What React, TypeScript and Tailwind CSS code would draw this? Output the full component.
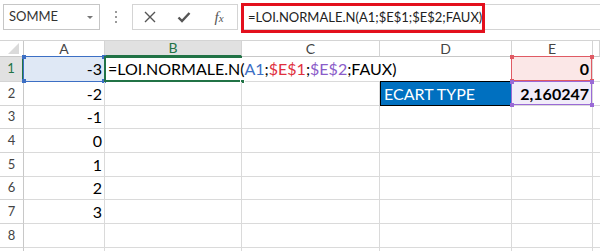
import React from "react";

const FONT = { fontFamily: "Lato, 'Open Sans', sans-serif" };

function Corners({ color }: { color: string }) {
  return (
    <>
      <span className={`absolute -left-[2px] -top-[2px] w-[4px] h-[4px] ${color}`} />
      <span className={`absolute -right-[2px] -top-[2px] w-[4px] h-[4px] ${color}`} />
      <span className={`absolute -left-[2px] -bottom-[2px] w-[4px] h-[4px] ${color}`} />
      <span className={`absolute -right-[2px] -bottom-[2px] w-[4px] h-[4px] ${color}`} />
    </>
  );
}

const rowH = [
  "h-[25px]",
  "h-[24px]",
  "h-[23px]",
  "h-[24px]",
  "h-[24px]",
  "h-[23px]",
  "h-[24px]",
  "h-[24px]",
  "h-[24px]",
];

const colW = ["w-[81px]", "w-[137px]", "w-[138px]", "w-[132px]", "w-[81px]", "flex-1"];

const aVals = ["-3", "-2", "-1", "0", "1", "2", "3", "", ""];

export default function App() {
  return (
    <div className="w-[600px] h-[251px] overflow-hidden bg-white text-black" style={FONT}>
      {/* Formula bar */}
      <div className="h-[40px] flex items-start pt-[4px]">
        <div className="ml-[3px] w-[97px] h-[26px] border border-[#c6c6c6] flex items-center justify-between pl-[5px] pr-[6px] text-[13px] text-[#333]">
          <span>SOMME</span>
          <span className="w-0 h-0 border-l-[3px] border-r-[3px] border-t-[3px] border-l-transparent border-r-transparent border-t-[#777]" />
        </div>
        <div className="w-[32px] h-[26px] flex flex-col items-center justify-center gap-[3px]">
          <span className="w-[2px] h-[2px] bg-[#9a9a9a]" />
          <span className="w-[2px] h-[2px] bg-[#9a9a9a]" />
          <span className="w-[2px] h-[2px] bg-[#9a9a9a]" />
        </div>
        <div className="w-[106px] h-[26px] border border-[#d4d4d4] flex items-center">
          <div className="w-[34px] flex justify-center">
            <svg width="12" height="12" viewBox="0 0 12 12">
              <path d="M1 1 L11 11 M11 1 L1 11" stroke="#555" strokeWidth="1.4" fill="none" />
            </svg>
          </div>
          <div className="w-[34px] flex justify-center">
            <svg width="14" height="12" viewBox="0 0 14 12">
              <path d="M1.5 6.5 L5 10 L12.5 2" stroke="#555" strokeWidth="2.4" fill="none" />
            </svg>
          </div>
          <div className="w-[36px] flex justify-center">
            <span className="text-[15px] italic text-[#555] leading-none" style={{ fontFamily: "'Liberation Serif', serif" }}>
              f<span className="text-[11px]">x</span>
            </span>
          </div>
        </div>
        <div className="ml-[3px] flex-1 h-[26px] border border-[#d4d4d4] border-r-0 relative">
          <div className="absolute -left-[1px] -top-[2px] w-[244px] h-[30px] border-[3px] border-[#e3101d] flex items-center pl-[4px] text-[13px] text-[#222] whitespace-nowrap">
            =LOI.NORMALE.N(A1;$E$1;$E$2;FAUX)
          </div>
        </div>
      </div>

      {/* Column headers */}
      <div className="h-[17px] flex border-t border-[#d4d4d4] text-[14px] text-[#444]">
        <div className="w-[24px] border-r border-b border-[#c8c8c8] relative">
          <svg className="absolute right-[4px] bottom-[2px]" width="11" height="11" viewBox="0 0 11 11">
            <path d="M11 0 L11 11 L0 11 Z" fill="#dadada" />
          </svg>
        </div>
        {["A", "B", "C", "D", "E", ""].map((c, i) => (
          <div
            key={i}
            className={`${colW[i]} flex items-center justify-center leading-none border-r border-[#d4d4d4] ${
              c === "B" ? "bg-[#e1e1e1] text-[#217346] border-b-2 border-b-[#217346]" : "border-b border-b-[#c8c8c8]"
            }`}
          >
            {c}
          </div>
        ))}
      </div>

      {/* Rows */}
      {rowH.map((h, r) => (
        <div key={r} className={`${h} flex text-[16px]`}>
          <div
            className={`w-[24px] flex items-center justify-center text-[13px] border-b border-[#d4d4d4] ${
              r === 0 ? "bg-[#e1e1e1] text-[#217346] border-r-2 border-r-[#217346]" : "text-[#444] border-r border-r-[#c8c8c8]"
            }`}
          >
            {r < 8 ? r + 1 : ""}
          </div>
          {/* A */}
          <div
            className={`${colW[0]} relative flex items-center justify-end pr-[2px] border-r border-b border-[#dadada] ${
              r === 0 ? "bg-[#dfe8f5]" : ""
            }`}
          >
            {aVals[r]}
            {r === 0 && (
              <>
                <span className="absolute -left-[1px] -top-[1px] -right-[1px] -bottom-[1px] border border-[#3c6fc4]" />
                <Corners color="bg-[#3c6fc4]" />
              </>
            )}
          </div>
          {/* B */}
          <div className={`${colW[1]} relative flex items-center border-b border-[#dadada] ${r === 0 ? "" : "border-r"}`}>
            {r === 0 && (
              <>
                <span className="absolute -left-[1px] -top-[1px] right-0 -bottom-[1px] border-l-2 border-t-2 border-b-2 border-[#217346]" />
                <span className="absolute -right-[3px] -bottom-[3px] w-[5px] h-[5px] bg-[#217346] border border-white" />
                <span className="absolute left-[3px] z-10 whitespace-nowrap">
                  =LOI.NORMALE.N(<span className="text-[#3c6fc4]">A1</span>;<span className="text-[#e0303e]">$E$1</span>;
                  <span className="text-[#8b5cc9]">$E$2</span>;FAUX)
                </span>
              </>
            )}
          </div>
          {/* C */}
          <div className={`${colW[2]} border-b border-[#dadada] ${r === 0 ? "" : "border-r"}`} />
          {/* D */}
          {r === 1 ? (
            <div className={`${colW[3]} flex items-center pl-[3px] bg-[#0070c0] text-white border border-black -mt-[1px]`}>
              ECART TYPE
            </div>
          ) : (
            <div className={`${colW[3]} border-b border-[#dadada] ${r === 0 ? "" : "border-r"}`} />
          )}
          {/* E */}
          {r === 0 ? (
            <div className={`${colW[4]} relative flex items-center justify-end pr-[3px] font-bold bg-[#fbe7e7] border-b border-r border-[#dadada]`}>
              0
              <span className="absolute -left-[1px] -top-[1px] right-0 bottom-0 border border-[#e05a64]" />
              <Corners color="bg-[#e05a64]" />
            </div>
          ) : r === 1 ? (
            <div className={`${colW[4]} relative flex items-center justify-end pr-[3px] font-bold bg-[#f1ecf9] border-b border-r border-[#dadada]`}>
              2,160247
              <span className="absolute -left-[1px] -top-[1px] right-0 bottom-0 border border-[#9a6ad6]" />
              <Corners color="bg-[#9a6ad6]" />
            </div>
          ) : (
            <div className={`${colW[4]} border-b border-r border-[#dadada]`} />
          )}
          <div className={`${colW[5]} border-b border-[#dadada]`} />
        </div>
      ))}
    </div>
  );
}
